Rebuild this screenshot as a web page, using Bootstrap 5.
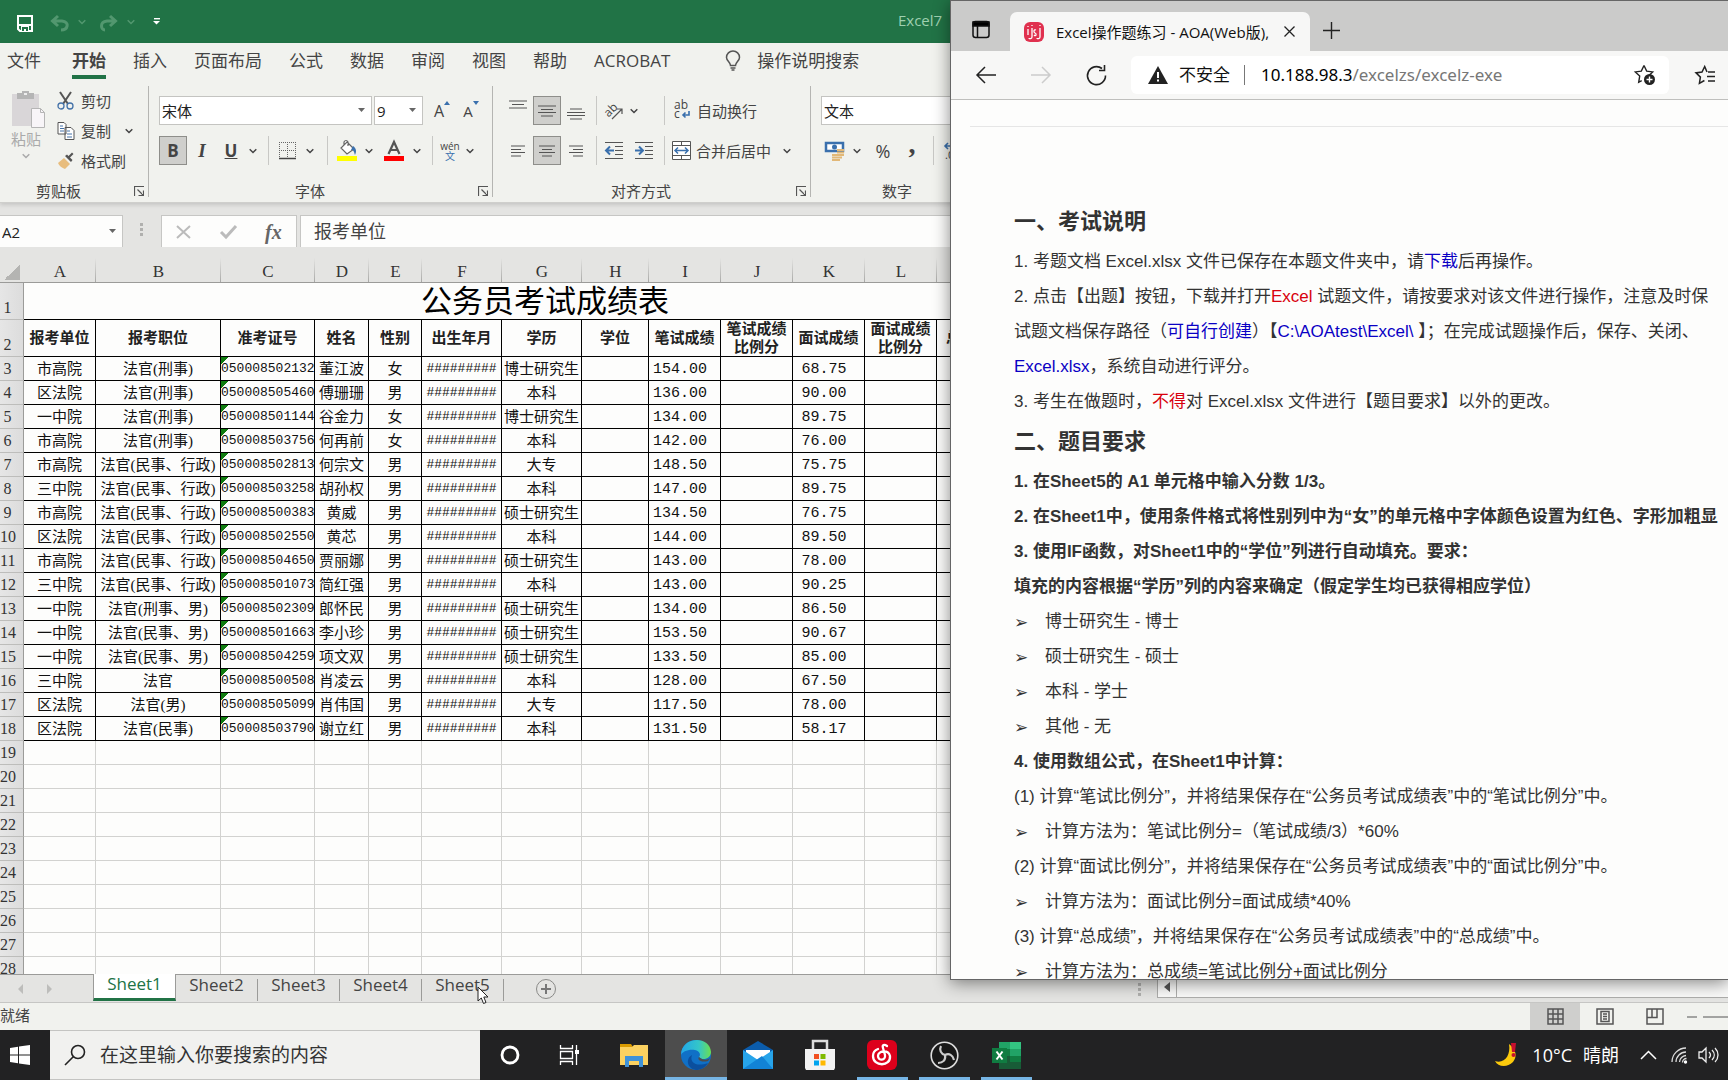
<!DOCTYPE html>
<html lang="zh-CN">
<head>
<meta charset="utf-8">
<meta name="viewport" content="width=device-width, initial-scale=1">
<title>Excel7</title>
<link href="https://cdn.jsdelivr.net/npm/bootstrap@5.3.0/dist/css/bootstrap.min.css" rel="stylesheet">
<style>
:root{--ui:"Open Sans","Noto Sans CJK SC",sans-serif;--green:#217346;--ink:#444}
body{font-family:var(--ui);font-size:15px;line-height:20px;color:var(--ink);height:100vh;overflow:hidden;background:#e4e4e2}
button{font:inherit;color:inherit;background:none;border:0;padding:0;flex:none;display:flex;align-items:center;justify-content:center;white-space:nowrap}
svg{flex:none;display:block;overflow:visible}
input,select{font:inherit;color:#222;border:0;background:none;outline:0;min-width:0}
.titlebar{height:43px;background:var(--green);padding-left:16px}
.titlebar .doc-name{color:#9fd0b0;margin-left:737px}
.ribbon{background:#f1f2ee;height:160px;border-bottom:1px solid #cfcfcc;box-shadow:0 2px 4px #0002}
.tabs-row{height:43px;padding-left:7px;gap:27px;font-size:17px}
.tabs-row button{height:36px;border-bottom:4px solid transparent;border-top:4px solid transparent}
.tabs-row .current{font-weight:700;border-bottom-color:var(--green)}
.grp{background:linear-gradient(#b5b5b2,#b5b5b2) right top/1px 111px no-repeat;height:116px;position:relative;padding:10px 0 0 10px;flex:none}
.grp-name{padding-top:5px}
.tool-row{height:40px;display:flex;align-items:flex-start}
.tool-row>*{height:29px}
.on{background:#cfcfcc;border:1px solid #8e8e8a}
.w16{width:16px}.w20{width:20px}.w28{width:28px}.w30{width:30px}.w24{width:24px}
.vline{width:15px;background:linear-gradient(#c8c8c5,#c8c8c5) center/1px 100% no-repeat;flex:none}
.combo{border:1px solid #c4c4c1;background:#fff;display:flex;align-items:center;flex:none}
.pick{appearance:none;height:100%;width:100%;padding:0 20px 0 2px;background:url("data:image/svg+xml,%3Csvg xmlns='http://www.w3.org/2000/svg' width='8' height='5'%3E%3Cpath d='M0 0h7L3.5 4z' fill='%23666'/%3E%3C/svg%3E") right 5px center no-repeat}
.clip-row{height:30px;display:flex;align-items:center;gap:6px}
.formula{height:44px;padding-top:12px}
.formula>div{height:33px;background:#fdfdfc;border:1px solid #c6c6c4}
.grid-area{flex:1 1 0;min-height:0;overflow:hidden;background:#fdfdfc}
.sheet-grid{table-layout:fixed;border-collapse:separate;border-spacing:0;width:1067px;font-family:"Liberation Serif","Noto Sans CJK SC",serif;color:#111}
.sheet-grid td,.sheet-grid th{height:24px;padding:0;border-right:1px solid #d2d2d0;border-bottom:1px solid #d2d2d0;text-align:center;vertical-align:middle;white-space:nowrap;overflow:hidden;line-height:18px;font-weight:400}
.sheet-grid thead th{height:36px;background:linear-gradient(#e4e4e2,#a9a9a7) right bottom/1px 24px no-repeat #e4e4e2;border-right:0;border-bottom:1px solid #9b9b99;vertical-align:bottom;padding-bottom:1px;font-size:17px;color:#333}
.sheet-grid tbody th{background:linear-gradient(90deg,#e6e6e6,#dcdcdc);border-right-color:#9b9b99;border-bottom-color:#bdbdbb;padding:0 8px 2px 0;font-size:16px;color:#333;vertical-align:bottom;overflow:visible}
.sheet-grid .cap td{height:37px;padding-top:2px;font-size:31px;line-height:34px;color:#000;border-bottom-color:#000}
.sheet-grid .heads th{height:36px}
.sheet-grid .heads td{height:36px;font-weight:700;color:#222;white-space:normal}
.sheet-grid .filled td{border-color:#000}
.sheet-grid .filled .idno,.sheet-grid .filled .hash{font-family:"Liberation Mono",monospace;font-size:13px}
.sheet-grid .idno{text-align:left;background:linear-gradient(135deg,#107c10 5px,transparent 5px) no-repeat}
.sheet-grid .score{font-family:"Liberation Mono",monospace;padding-right:9px;padding-top:2px}
.corner{background:linear-gradient(135deg,transparent 50%,#b4b4b2 50%) 4px 17px/16px 16px no-repeat #e4e4e2 !important}
.sheetbar{height:29px;border-top:1px solid #9b9b99;border-bottom:1px solid #c6c6c4;font-size:17px}
.sheetbar .tab{width:82px;height:22px;border-right:1px solid #9b9b99;line-height:16px;padding-bottom:11px}
.sheetbar .tab.current{width:83px;height:27px;margin-top:-1px;background:#fff;border:solid #9b9b99;border-width:0 1px 3px;border-bottom-color:var(--green);color:var(--green);padding-bottom:4px}
.hscroll{height:23px;background:#fafaf9;border:1px solid #adadab;border-right:0;width:571px}
.statusbar{height:27px;background:#f1f2ee}
.statusbar button{width:50px;height:27px}
.taskbar{height:50px;background:#222223;color:#fff}
.taskbar .find{width:430px;background:#f1f1ef;border:1px solid #c4c4c2;border-width:1px 0;color:#333;padding-left:14px;gap:10px;flex:none}
.find input{width:330px;font-size:19px}
.find input::placeholder{color:#333;opacity:1}
.app{width:62px;height:50px}
.app.run{background:linear-gradient(#76b5e5,#76b5e5) center bottom/51px 3px no-repeat}
.app.front{background:linear-gradient(#76b5e5,#76b5e5) center bottom/100% 3px no-repeat #4d4d4d}
.edge-win{position:absolute;left:950px;top:0;right:0;bottom:100px;background:#fdfdfc;border:1px solid #666;border-right:0;box-shadow:0 3px 16px #0007;overflow:hidden;color:#111}
.strip{height:50px;background:#cbcbca;padding-left:19px}
.strip .page-tab{width:300px;height:39px;background:#f7f7f6;border-radius:7px 7px 0 0;margin-left:18px;padding:0 15px 0 14px}
.strip .page-title{margin-left:12px;color:#111;white-space:nowrap}
.navrow{height:49px;background:#f7f7f6;border-bottom:1px solid #bfbfbd;padding-left:21px;font-size:17px}
.addr{width:538px;height:38px;background:#fff;border-radius:6px;padding-left:17px;flex:none}
.addr .url{color:#777;white-space:nowrap;font-family:"Noto Sans","Open Sans",sans-serif}
.paper{margin-left:19px;margin-top:26px;border-top:1px solid #e6e6e6;padding:72px 0 0 44px;font:17px/35px "Liberation Sans","Noto Sans CJK SC",sans-serif;color:#333;white-space:nowrap}
.paper h2{font-size:22px;line-height:45px;font-weight:700;margin:0}
.paper p,.paper ul{margin:0}
.paper li{height:35px;display:flex;align-items:center}
.paper li::before{content:"➢";font-family:"DejaVu Sans",sans-serif;font-size:17px;line-height:20px;width:31px}
.paper a,.paper .blue{color:#0a00c4;text-decoration:none}
.paper .red{color:#d8000c}
.pointer{position:absolute;left:477px;bottom:75px}
</style>
<script src="https://cdn.jsdelivr.net/npm/bootstrap@5.3.0/dist/js/bootstrap.bundle.min.js"></script>
</head>
<body class="d-flex flex-column position-relative">
<svg width="0" height="0" class="position-absolute" aria-hidden="true"><defs>
<symbol id="chev" viewBox="0 0 8 6"><path d="M.7 1.2 4 4.5l3.300-3.300" fill="none" stroke="currentColor" stroke-width="1.500"/></symbol>
<symbol id="launch" viewBox="0 0 10 10"><path d="M.5 10V.5H10M3.500 3.500 9 9M9.500 4.500v5h-5" fill="none" stroke="#555" stroke-width="1.200"/></symbol>
</defs></svg>

<header class="titlebar d-flex align-items-center flex-shrink-0">
  <button class="pt-1" aria-label="保存"><svg width="18" height="18" viewBox="0 0 18 18"><path d="M2 1h14v15H4l-2-2z" fill="none" stroke="#fff" stroke-width="2"/><path d="M2 10h13" stroke="#fff" stroke-width="2"/><path d="M5 11h8v6H5z" fill="#fff"/><path d="M6 12h6v4h-2v-2H8v2H6z" fill="#217346"/></svg></button>
  <button class="ms-3 pt-1" aria-label="撤消"><svg width="20" height="18" viewBox="0 0 20 18"><path d="M8 1 2.500 6 8 11M3 6h9c8 1 6 9-1 9" fill="none" stroke="#52976f" stroke-width="3"/></svg></button>
  <svg class="ms-2" width="8" height="6" style="color:#52976f"><use href="#chev"/></svg>
  <button class="pt-1" style="margin-left:13px" aria-label="恢复"><svg width="20" height="18" viewBox="0 0 20 18"><path d="M11 1l5.500 5-5.500 5M16 6H8c-8 1-6 9-2 9" fill="none" stroke="#52976f" stroke-width="3"/></svg></button>
  <svg class="ms-2" width="8" height="6" style="color:#52976f"><use href="#chev"/></svg>
  <button style="margin-left:18px" aria-label="自定义快速访问工具栏"><svg width="8" height="7" viewBox="0 0 8 7"><path d="M1 .7h6" stroke="#fff" stroke-width="1.400"/><path d="M0 3h7L3.500 6.500z" fill="#fff"/></svg></button>
  <span class="doc-name mb-1">Excel7</span>
</header>

<section class="ribbon flex-shrink-0">
  <nav class="tabs-row d-flex">
    <button>文件</button><button class="current ms-1">开始</button><button>插入</button><button>页面布局</button><button>公式</button><button>数据</button><button>审阅</button><button>视图</button><button>帮助</button><button>ACROBAT</button>
    <button class="ms-4 gap-3"><svg class="ms-1" width="16" height="20" viewBox="0 0 16 20"><path d="M5.500 14.500C5.500 11 1.500 10 1.500 6.500a6.300 6.300 0 0 1 13 0C14.500 10 10.500 11 10.500 14.500zM5.500 17h5M6.500 19h3" fill="none" stroke="#555" stroke-width="1.500"/></svg>操作说明搜索</button>
  </nav>
  <div class="d-flex overflow-hidden">
    <!-- clipboard -->
    <div class="grp" style="width:149px;padding:0">
      <div class="d-flex" style="height:90px">
        <button class="flex-column align-items-center justify-content-start" style="width:52px;color:#aaa;padding-top:4px">
          <svg class="ms-1" width="36" height="39" viewBox="0 0 36 39"><path d="M2 4h27v32H2z" fill="#d9d6d8"/><path d="M7 3h5V1h7v2h5v6H7z" fill="#b5b5b5"/><path d="M14 3h3v2h-3z" fill="#eee"/><path d="M21.500 18.500h9l4 4v15h-13z" fill="#f8f5f8" stroke="#b5b5b5"/><path d="M30.500 18.500v4h4" fill="none" stroke="#b5b5b5"/></svg>粘贴<svg class="mt-1" width="8" height="6"><use href="#chev"/></svg></button>
        <div style="margin-left:5px">
          <button class="clip-row"><svg width="18" height="18" viewBox="0 0 18 18"><path d="M3 0l8 12M14 0 6 12" stroke="#555" stroke-width="2"/><circle cx="4" cy="14" r="3" fill="none" stroke="#4472a8" stroke-width="1.300"/><circle cx="13" cy="14" r="3" fill="none" stroke="#4472a8" stroke-width="1.300"/></svg>剪切</button>
          <div class="clip-row"><button class="clip-row"><svg width="18" height="18" viewBox="0 0 18 18"><path d="M1 .5h6l2 2V12H1zM8 5.500h6l3 3V17.500H8z" fill="#fff" stroke="#555"/><path d="M3 4h3M3 6.500h4M3 9h4M10 9h3M10 12h5M10 15h5" stroke="#4472a8"/></svg>复制</button><svg class="ms-2" width="8" height="6"><use href="#chev"/></svg></div>
          <button class="clip-row"><svg width="18" height="18" viewBox="0 0 18 18"><path d="M1 11l6-5 6 6-5 5C5 16 2 14 1 11z" fill="#e8bd7d"/><path d="M8 4l6 6 1.500-2L13 5.500 16.500 2 15 .5 11.500 4 10 2.500z" fill="#555"/></svg>格式刷</button>
        </div>
      </div>
      <div class="d-flex align-items-center grp-name" style="padding-left:36px">剪贴板<svg style="margin-left:53px" width="10" height="10"><use href="#launch"/></svg></div>
    </div>
    <!-- font -->
    <div class="grp" style="width:344px">
      <div class="tool-row">
        <label class="combo" style="width:213px"><select class="pick" aria-label="字体"><option>宋体</option></select></label>
        <label class="combo" style="width:49px;margin-left:2px"><select class="pick" aria-label="字号"><option>9</option></select></label>
        <button class="w30 ms-1" style="font-size:16px" aria-label="增大字号">A<svg width="6" height="4" class="mb-3"><path d="M0 4 3 0l3 4z" fill="#3a70ad"/></svg></button>
        <button class="w28" aria-label="减小字号">A<svg width="6" height="4" class="mb-3"><path d="M0 0h6L3 4z" fill="#3a70ad"/></svg></button>
      </div>
      <div class="tool-row">
        <button class="w28 on fw-bold" style="font-size:17px">B</button>
        <button class="w30 fw-bold fst-italic" style="font-family:'Liberation Serif',serif;font-size:19px">I</button>
        <button class="w28 fw-bold text-decoration-underline" style="font-size:17px">U</button>
        <button class="w16" aria-label="下划线选项"><svg width="8" height="6"><use href="#chev"/></svg></button>
        <i class="vline"></i>
        <button class="w24" aria-label="边框"><svg width="18" height="18" viewBox="0 0 18 18"><path d="M.5 0v16M8.500 0v16M16.500 0v16M0 .5h17M0 8.500h17" stroke="#666" stroke-dasharray="1 1"/><path d="M0 16.500h17" stroke="#444" stroke-width="1.500"/></svg></button>
        <button class="w20" aria-label="边框选项"><svg width="8" height="6"><use href="#chev"/></svg></button>
        <i class="vline"></i>
        <button class="w24" aria-label="填充颜色"><svg width="22" height="21" viewBox="0 0 22 21"><path d="M11 2l7 7-7 5-6-6zM8 6V2c1-2 3-2 4 0v4" fill="#fff" stroke="#666" stroke-width="1.200"/><path d="M17 6c3 2 4 5 2 9-1-3-1-5-4-5z" fill="#3a70ad"/><path d="M1 16h20v5H1z" fill="#ff0"/></svg></button>
        <button class="w20" aria-label="填充选项"><svg width="8" height="6"><use href="#chev"/></svg></button>
        <button class="w30" aria-label="字体颜色"><svg width="20" height="20" viewBox="0 0 20 20"><path d="M4.500 13 10 1l5.500 12M6.500 9h7" fill="none" stroke="#555" stroke-width="2.200"/><path d="M0 15h20v5H0z" fill="#f00"/></svg></button>
        <button class="w16" aria-label="颜色选项"><svg width="8" height="6"><use href="#chev"/></svg></button>
        <i class="vline"></i>
        <button class="flex-column w20" style="font-size:10px;line-height:10px"><span>wén</span><span style="color:#3a70ad">文</span></button>
        <button class="w20" aria-label="拼音选项"><svg width="8" height="6"><use href="#chev"/></svg></button>
      </div>
      <div class="d-flex align-items-center grp-name" style="padding-left:136px;padding-right:5px">字体<svg class="ms-auto" width="10" height="10"><use href="#launch"/></svg></div>
    </div>
    <!-- alignment -->
    <div class="grp" style="width:318px">
      <div class="tool-row">
        <button class="w30" aria-label="顶端对齐" style="padding-bottom:12px"><svg width="18" height="9" viewBox="0 0 18 9"><path d="M0 1h18M3 4.500h12M0 8h18" stroke="#555"/></svg></button>
        <button class="w28 on" aria-label="垂直居中"><svg width="18" height="12" viewBox="0 0 18 12"><path d="M0 1h18M3 4.500h12M0 7.500h18M3 11h12" stroke="#555"/></svg></button>
        <button class="w30" aria-label="底端对齐" style="padding-top:6px"><svg width="18" height="12" viewBox="0 0 18 12"><path d="M3 1h12M0 4.500h18M0 7.500h18M3 11h12" stroke="#555"/></svg></button>
        <i class="vline" style="margin-left:-2px"></i>
        <button class="w20" aria-label="方向"><svg width="20" height="18" viewBox="0 0 20 18"><g transform="rotate(-45 8 8)"><text x="0" y="11" font-size="12" fill="#444">ab</text></g><path d="M8 17 18 7M18 12V7h-5" fill="none" stroke="#555" stroke-width="1.200"/></svg></button>
        <button class="w20" aria-label="方向选项"><svg width="8" height="6"><use href="#chev"/></svg></button>
        <i class="vline" style="margin-left:13px"></i>
        <button style="padding-left:2px;gap:5px"><svg width="18" height="19" viewBox="0 0 18 19"><text x="0" y="8" font-size="12" fill="#444">ab</text><text x="0" y="17" font-size="12" fill="#444">c</text><path d="M15 10v4H9M11.500 11.500 9 14l2.500 2.500" fill="none" stroke="#3a70ad" stroke-width="1.600"/></svg>自动换行</button>
      </div>
      <div class="tool-row">
        <button class="w30" aria-label="左对齐"><svg width="14" height="12" viewBox="0 0 14 12"><path d="M0 1h14M0 4.500h10M0 7.500h14M0 11h10" stroke="#555"/></svg></button>
        <button class="w28 on" aria-label="居中"><svg width="16" height="12" viewBox="0 0 16 12"><path d="M0 1h16M3 4.500h10M0 7.500h16M3 11h10" stroke="#555"/></svg></button>
        <button class="w30" aria-label="右对齐"><svg width="14" height="12" viewBox="0 0 14 12"><path d="M0 1h14M4 4.500h10M0 7.500h14M4 11h10" stroke="#555"/></svg></button>
        <i class="vline" style="margin-left:-2px"></i>
        <button class="w20" aria-label="减少缩进"><svg width="19" height="17" viewBox="0 0 19 17"><path d="M0 .5h18M10 4.500h8M10 8.500h8M10 12.500h8M0 16.500h18" stroke="#555"/><path d="M9 8.500H1M5 4.500 1 8.500l4 4" fill="none" stroke="#3a70ad" stroke-width="2"/></svg></button>
        <button class="w20" style="margin-left:10px" aria-label="增加缩进"><svg width="19" height="17" viewBox="0 0 19 17"><path d="M0 .5h18M10 4.500h8M10 8.500h8M10 12.500h8M0 16.500h18" stroke="#555"/><path d="M0 8.500h8M4 4.500l4 4-4 4" fill="none" stroke="#3a70ad" stroke-width="2"/></svg></button>
        <i class="vline" style="margin-left:3px"></i>
        <button style="gap:5px"><svg width="19" height="19" viewBox="0 0 19 19"><path d="M.5.5h18v18H.5zM.5 4.500h18M.5 14.500h18M9.500 0v4M9.500 15v4" fill="#fff" stroke="#555"/><path d="M3 9.500h13M6 6.500l-3 3 3 3M13 6.500l3 3-3 3" fill="none" stroke="#3a70ad" stroke-width="1.500"/></svg>合并后居中</button>
        <button class="w16 ms-2" aria-label="合并选项"><svg width="8" height="6"><use href="#chev"/></svg></button>
      </div>
      <div class="d-flex align-items-center grp-name" style="padding-left:108px;padding-right:5px">对齐方式<svg class="ms-auto" width="10" height="10"><use href="#launch"/></svg></div>
    </div>
    <!-- number -->
    <div class="grp" style="width:240px">
      <div class="tool-row"><label class="combo" style="width:170px"><select class="pick" aria-label="数字格式"><option>文本</option></select></label></div>
      <div class="tool-row">
        <button class="w28" aria-label="会计数字格式"><svg width="20" height="20" viewBox="0 0 20 20"><path d="M1 2h17v8H1z" fill="#fff" stroke="#3a70ad" stroke-width="2.500"/><circle cx="9.500" cy="6" r="2.500" fill="#3a70ad"/><path d="M12 9h7M12 11.500h7M12 14h7M7 14h5M7 16.500h10M7 19h8" stroke="#e2b877" stroke-width="1.800"/></svg></button>
        <button class="w16" aria-label="会计选项"><svg width="8" height="6"><use href="#chev"/></svg></button>
        <button class="w30" style="font-size:18px;margin-left:3px">%</button>
        <button class="w28 fw-bold" style="font-size:28px;padding-bottom:14px;font-family:'Liberation Serif',serif">,</button>
        <i class="vline"></i>
        <button class="w24" aria-label="增加小数位数"><svg width="18" height="18" viewBox="0 0 18 18"><path d="M8 4H1M4 1 1 4l3 3" fill="none" stroke="#3a70ad" stroke-width="1.600"/><text x="1" y="17" font-size="11" fill="#444">.00</text></svg></button>
      </div>
      <div class="grp-name" style="padding-left:61px">数字</div>
    </div>
  </div>
</section>

<section class="formula d-flex flex-shrink-0">
  <div class="d-flex border-start-0" style="width:123px"><input class="pick" aria-label="名称框" value="A2"></div>
  <svg class="mt-2" style="margin:0 17px" width="4" height="14"><path d="M0 0h3v3H0zM0 5h3v3H0zM0 10h3v3H0z" fill="#b0b0ae"/></svg>
  <div class="d-flex align-items-center justify-content-around" style="width:136px">
    <button aria-label="取消"><svg width="15" height="14" viewBox="0 0 15 14"><path d="M1 1l13 12M14 1 1 13" stroke="#bbb" stroke-width="2"/></svg></button>
    <button aria-label="输入"><svg width="17" height="14" viewBox="0 0 17 14"><path d="M1 7l5 5L16 1" fill="none" stroke="#bbb" stroke-width="3"/></svg></button>
    <button class="fst-italic fw-bold" style="font-family:'Liberation Serif',serif;font-size:20px;color:#666">fx</button>
  </div>
  <div class="flex-grow-1 border-end-0" style="margin-left:3px"><input class="w-100 h-100" style="padding:0 0 4px 13px;font-size:18px;color:#444" aria-label="编辑栏" value="报考单位"></div>
</section>

<main class="grid-area"><table class="sheet-grid"><colgroup id="cols"></colgroup><thead><tr id="letters"></tr></thead><tbody id="cells"></tbody></table></main>

<nav class="sheetbar d-flex flex-shrink-0">
  <svg style="margin:9px 0 0 17px" width="36" height="10"><path d="M6 0v10L1 5zM30 0v10l5-5z" fill="#bdbdbb"/></svg>
  <button class="tab current" style="margin-left:40px">Sheet1</button><button class="tab mt-1">Sheet2</button><button class="tab mt-1">Sheet3</button><button class="tab mt-1">Sheet4</button><button class="tab mt-1">Sheet5</button>
  <button style="margin-left:31px" aria-label="新工作表"><svg width="22" height="22" viewBox="0 0 22 22"><circle cx="11" cy="11" r="9.500" fill="none" stroke="#8a8a88"/><path d="M11 6v10M6 11h10" stroke="#777" stroke-width="2"/></svg></button>
  <svg class="ms-auto" style="margin:8px 15px 0 0" width="4" height="14"><path d="M0 0h3v3H0zM0 5h3v3H0zM0 10h3v3H0z" fill="#b0b0ae"/></svg>
  <div class="hscroll d-flex"><button style="width:19px;border-right:1px solid #adadab" aria-label="向左滚动"><svg width="6" height="10"><path d="M6 0v10L0 5z" fill="#555"/></svg></button></div>
</nav>

<footer class="statusbar d-flex align-items-center flex-shrink-0">
  <span class="mb-1">就绪</span>
  <button class="ms-auto" style="background:#cfcfcd" aria-label="普通"><svg width="17" height="17" viewBox="0 0 17 17"><path d="M1 1h15v15H1zM6 1v15M11 1v15M1 6h15M1 11h15" fill="none" stroke="#555" stroke-width="1.500"/></svg></button>
  <button aria-label="页面布局视图"><svg width="18" height="17" viewBox="0 0 18 17"><path d="M1 1h16v15H1zM5 3.500h8v10H5zM7 6h4M7 8.500h4M7 11h4" fill="none" stroke="#555" stroke-width="1.500"/></svg></button>
  <button aria-label="分页预览"><svg width="18" height="17" viewBox="0 0 18 17"><path d="M1 1h16v15H1zM1 9.500h10V1M6 1v8" fill="none" stroke="#555" stroke-width="1.500"/></svg></button>
  <svg width="48" height="10"><path d="M7 5h10M23 5h25" stroke="#555"/></svg>
</footer>

<div class="taskbar d-flex flex-shrink-0">
  <button style="width:50px;padding-right:10px" aria-label="开始"><svg width="20" height="20" viewBox="0 0 20 20"><path d="M0 3l8-1.200V9.500H0zM9 1.600 20 0v9.500H9zM0 10.500h8v7.700L0 17zM9 10.500h11V20L9 18.400z" fill="#fff"/></svg></button>
  <label class="find d-flex align-items-center"><svg width="22" height="22" viewBox="0 0 22 22"><circle cx="14" cy="8" r="6.500" fill="none" stroke="#222" stroke-width="1.600"/><path d="M9.500 12.500 1 21" stroke="#222" stroke-width="1.600"/></svg><input type="search" placeholder="在这里输入你要搜索的内容" style="margin-left:2px"></label>
  <button style="width:60px" aria-label="Cortana"><svg width="20" height="20" viewBox="0 0 20 20"><circle cx="10" cy="10" r="8" fill="none" stroke="#fff" stroke-width="2.800"/></svg></button>
  <button style="width:60px;margin-right:3px" aria-label="任务视图"><svg width="20" height="20" viewBox="0 0 20 20"><path d="M.5 0v3.500h12V0M.5 20v-3.500h12V20M.5 6.500h12v7H.5zM16.500 0v20" fill="none" stroke="#fff" stroke-width="1.300"/><path d="M15 5h4v4h-4z" fill="#fff"/></svg></button>
  <button class="app" aria-label="文件资源管理器"><svg width="28" height="24" viewBox="0 0 28 24"><path d="M0 1h11l2 3H0z" fill="#d99a00"/><path d="M0 4l12 0 2-2h14v20H0z" fill="#fbd160"/><path d="M5 13h18v11h-4v-6H9v6H5z" fill="#3f92d8"/></svg></button>
  <button class="app front" aria-label="Edge"><svg width="30" height="30" viewBox="0 0 30 30"><defs><linearGradient id="eg" x1="0" x2="1"><stop offset="0" stop-color="#22a7e8"/><stop offset=".6" stop-color="#34c6c8"/><stop offset="1" stop-color="#6be050"/></linearGradient></defs><circle cx="15" cy="15" r="15" fill="#1070c6"/><path d="M0 15C0-4 29-5 30 12c0 7-9 9-12 5 2-2 1-6-4-7C7 9 1 12 0 15z" fill="url(#eg)"/><path d="M11 15c-3 8 5 12 16 8-3 5-8 7-12 7C5 28 5 18 11 15z" fill="#0b4f9e"/><path d="M18 17c-2 2 1 6 9 4l3-4c-3 4-9 3-12 0z" fill="#4d4d4d"/></svg></button>
  <button class="app" aria-label="邮件"><svg width="30" height="28" viewBox="0 0 30 28"><path d="M0 9 15 0l15 9v4H0z" fill="#0b5cab"/><path d="M3 9h24v10H3z" fill="#fff"/><path d="M0 9l15 10L30 9v19H0z" fill="#27a4ea"/><path d="M0 28 19 15l11 13z" fill="#1283d6"/></svg></button>
  <button class="app" aria-label="应用商店"><svg width="30" height="30" viewBox="0 0 30 30"><path d="M8 10V1h14v9" fill="none" stroke="#ddd" stroke-width="2.500"/><path d="M0 9h30v19l-1 2H1l-1-2z" fill="#f3f3f3"/><path d="M9 14h5v5H9z" fill="#f25022"/><path d="M15.500 14h5v5h-5z" fill="#7fba00"/><path d="M9 20.500h5v5H9z" fill="#00a4ef"/><path d="M15.500 20.500h5v5h-5z" fill="#ffb900"/></svg></button>
  <button class="app run" aria-label="网易云音乐"><svg width="30" height="30" viewBox="0 0 30 30"><rect width="30" height="30" rx="6" fill="#dd001b"/><path d="M20 6c-3-2-5-1-4 2l2 7c1 6-7 6-7 1 0-5 10-7 12 0 1 11-17 11-17 0 0-4 2-6 5-7" fill="none" stroke="#fff" stroke-width="2.300" stroke-linecap="round"/></svg></button>
  <button class="app run" aria-label="OBS"><svg width="29" height="29" viewBox="0 0 29 29"><circle cx="14.500" cy="14.500" r="13.300" fill="#181818" stroke="#ddd" stroke-width="1.600"/><path d="M11 5c-2 4 0 8 4 9 4-2 8 0 9 5M15 14c1 5-2 8-7 8" fill="none" stroke="#ccc" stroke-width="2.200"/></svg></button>
  <button class="app run" aria-label="Excel"><svg width="29" height="27" viewBox="0 0 29 27"><path d="M7 0h11v7H7z" fill="#21a366"/><path d="M18 0h11v7H18z" fill="#33c481"/><path d="M7 7h11v7H7z" fill="#107c41"/><path d="M18 7h11v7H18z" fill="#21a366"/><path d="M7 14h22v13H7z" fill="#185c37"/><path d="M18 14h11v6H18z" fill="#107c41"/><path d="M0 6h15v15H0z" fill="#107c41"/><path d="M4.500 9.500l6 8M10.500 9.500l-6 8" stroke="#fff" stroke-width="2"/></svg></button>
  <div class="ms-auto d-flex align-items-center" style="font-size:18px">
    <svg width="24" height="24" viewBox="0 0 24 24"><path d="M15 1c8 6 8 13 4 18-6 6-15 5-18-1 9 3 16-5 14-17z" fill="#fcca0c"/><path d="M17 0h5l-1 9h-3z" fill="#c8102e"/><circle cx="19.500" cy="12" r="2" fill="#c8102e"/></svg>
    <span style="margin-left:14px">10°C</span><span style="margin-left:11px">晴朗</span>
    <svg style="margin-left:21px" width="17" height="10" viewBox="0 0 17 10"><path d="M1 9l7.500-7.500L16 9" fill="none" stroke="#fff" stroke-width="1.500"/></svg>
    <svg style="margin-left:14px" width="17" height="17" viewBox="0 0 17 17"><path d="M1 15A14 14 0 0 1 15 1M5 15A10 10 0 0 1 15 5M8.500 15a7 7 0 0 1 6.500-6.500M11.500 15.500a4 4 0 0 1 4-4" fill="none" stroke="#ddd" stroke-width="1.300"/><circle cx="14.500" cy="15" r="1.700" fill="#fff"/></svg>
    <svg style="margin:0 9px 0 10px" width="21" height="18" viewBox="0 0 21 18"><path d="M1 6h3l4-4v14l-4-4H1zM11 6c2 2 2 4 0 6M14 4c3 3 3 7 0 10M17 2c4 4 4 10 0 14" fill="none" stroke="#eee" stroke-width="1.300"/></svg>
  </div>
</div>

<!-- browser window -->
<section class="edge-win">
  <div class="strip d-flex align-items-end">
    <button class="pb-2" aria-label="标签页操作"><svg class="mb-1" width="22" height="19" viewBox="0 0 22 19"><rect x="3" y="1.500" width="16" height="16" rx="2.500" fill="none" stroke="#111" stroke-width="1.500"/><path d="M3 2h16v4H3zM7.500 6v11" stroke="#111" stroke-width="1.500"/></svg></button>
    <div class="page-tab d-flex align-items-center">
      <svg width="20" height="20" viewBox="0 0 20 20"><rect width="20" height="20" rx="6" fill="#e0314f"/><path d="M4 7v6M8 6v9c0 2-3 2-3 1M12 8c-2-1-3 2-1 3s1 4-1 2M16 6v9c0 2-3 2-3 1M4 4v1M8 3v1M16 3v1" fill="none" stroke="#fff" stroke-width="1.300"/></svg>
      <span class="page-title">Excel操作题练习 - AOA(Web版),</span>
      <button class="ms-auto" aria-label="关闭标签页"><svg width="11" height="11" viewBox="0 0 11 11"><path d="M.5.5l10 10M10.500.5l-10 10" stroke="#222" stroke-width="1.300"/></svg></button>
    </div>
    <button style="margin:0 0 12px 13px" aria-label="新建标签页"><svg width="17" height="17"><path d="M8.500 0v17M0 8.500h17" stroke="#222" stroke-width="1.400"/></svg></button>
  </div>
  <div class="navrow d-flex align-items-center">
    <button style="width:28px" aria-label="后退"><svg width="20" height="18" viewBox="0 0 20 18"><path d="M20 9H1M9 1 1 9l8 8" fill="none" stroke="#222" stroke-width="1.500"/></svg></button>
    <button style="width:28px;margin-left:27px" aria-label="前进"><svg width="20" height="18" viewBox="0 0 20 18"><path d="M0 9h19M11 1l8 8-8 8" fill="none" stroke="#ccc" stroke-width="1.500"/></svg></button>
    <button style="width:28px;margin-left:27px;margin-right:21px" aria-label="刷新"><svg width="21" height="21" viewBox="0 0 21 21"><path d="M19.500 10.500A9 9 0 1 1 16 3.500M18.500 0v5.500H13" fill="none" stroke="#222" stroke-width="1.600"/></svg></button>
    <div class="addr d-flex align-items-center">
      <svg width="20" height="18" viewBox="0 0 20 18"><path d="M10 0l10 18H0z" fill="#222"/><path d="M10 6v6M10 13.500v2" stroke="#fff" stroke-width="2"/></svg>
      <span style="margin-left:11px">不安全</span>
      <i class="vline" style="height:20px;width:1px;background:#777;margin:0 16px 0 14px"></i>
      <span class="url"><span class="text-black">10.188.98.3</span>/excelzs/excelz-exe</span>
      <button class="ms-auto" style="padding-right:13px" aria-label="添加到收藏夹"><svg width="22" height="22" viewBox="0 0 22 22"><path d="M10 1.500l2.700 5.600 6 .8-4.400 4.200M10 1.500 7.300 7.100l-6 .8 4.400 4.200-1 6.200 3-1.600" fill="none" stroke="#222" stroke-width="1.400"/><circle cx="15.500" cy="15.500" r="5.500" fill="#222"/><path d="M15.500 12.500v6M12.500 15.500h6" stroke="#fff" stroke-width="1.400"/></svg></button>
    </div>
    <button style="margin-left:25px" aria-label="收藏夹"><svg width="22" height="20" viewBox="0 0 22 20"><path d="M13 7l-2.300-5.500L8 7.100l-6 .8 4.400 4.200-1 6.200 5-2.800M14 7h7M13 11.500h8M14 16h7" fill="none" stroke="#222" stroke-width="1.500"/></svg></button>
  </div>
  <article class="paper">
    <h2>一、考试说明</h2>
    <p>1. 考题文档 Excel.xlsx 文件已保存在本题文件夹中，请<a href="#">下载</a>后再操作。</p>
    <p>2. 点击【出题】按钮，下载并打开<span class="red">Excel</span> 试题文件，请按要求对该文件进行操作，注意及时保<br>试题文档保存路径（<span class="blue">可自行创建</span>）【<span class="blue">C:\AOAtest\Excel\</span> 】；在完成试题操作后，保存、关闭、<br><span class="blue">Excel.xlsx</span>，系统自动进行评分。</p>
    <p>3. 考生在做题时，<span class="red">不得</span>对 Excel.xlsx 文件进行【题目要求】以外的更改。</p>
    <h2>二、题目要求</h2>
    <p class="fw-bold">1. 在Sheet5的 A1 单元格中输入分数 1/3。</p>
    <p class="fw-bold">2. 在Sheet1中，使用条件格式将性别列中为“女”的单元格中字体颜色设置为红色、字形加粗显</p>
    <p class="fw-bold">3. 使用IF函数，对Sheet1中的“学位”列进行自动填充。要求：<br>填充的内容根据“学历”列的内容来确定（假定学生均已获得相应学位）</p>
    <ul class="list-unstyled"><li>博士研究生 - 博士</li><li>硕士研究生 - 硕士</li><li>本科 - 学士</li><li>其他 - 无</li></ul>
    <p class="fw-bold">4. 使用数组公式，在Sheet1中计算：</p>
    <p>(1) 计算“笔试比例分”，并将结果保存在“公务员考试成绩表”中的“笔试比例分”中。</p>
    <ul class="list-unstyled"><li>计算方法为：笔试比例分=（笔试成绩/3）*60%</li></ul>
    <p>(2) 计算“面试比例分”，并将结果保存在“公务员考试成绩表”中的“面试比例分”中。</p>
    <ul class="list-unstyled"><li>计算方法为：面试比例分=面试成绩*40%</li></ul>
    <p>(3) 计算“总成绩”，并将结果保存在“公务员考试成绩表”中的“总成绩”中。</p>
    <ul class="list-unstyled"><li>计算方法为：总成绩=笔试比例分+面试比例分</li></ul>
  </article>
</section>
<svg class="pointer" width="13" height="19" viewBox="0 0 13 19"><path d="M1 1v14l3.300-3 2.200 5.500 2.500-1L6.800 11H11z" fill="#fff" stroke="#222"/></svg>

<script>
const widths=[24,72,125,94,54,53,80,80,67,72,72,72,72,64,66];
document.getElementById('cols').innerHTML=widths.map(w=>`<col style="width:${w}px">`).join('');
document.getElementById('letters').innerHTML='<th class="corner"></th>'+[...'ABCDEFGHIJKLMN'].map(c=>`<th>${c}</th>`).join('');
const heads=['报考单位','报考职位','准考证号','姓名','性别','出生年月','学历','学位','笔试成绩','笔试成绩<br>比例分','面试成绩','面试成绩<br>比例分','总成绩',''];
const people=`市高院|法官(刑事)|050008502132|董江波|女|博士研究生|154.00|68.75
区法院|法官(刑事)|050008505460|傅珊珊|男|本科|136.00|90.00
一中院|法官(刑事)|050008501144|谷金力|女|博士研究生|134.00|89.75
市高院|法官(刑事)|050008503756|何再前|女|本科|142.00|76.00
市高院|法官(民事、行政)|050008502813|何宗文|男|大专|148.50|75.75
三中院|法官(民事、行政)|050008503258|胡孙权|男|本科|147.00|89.75
市高院|法官(民事、行政)|050008500383|黄威|男|硕士研究生|134.50|76.75
区法院|法官(民事、行政)|050008502550|黄芯|男|本科|144.00|89.50
市高院|法官(民事、行政)|050008504650|贾丽娜|男|硕士研究生|143.00|78.00
三中院|法官(民事、行政)|050008501073|简红强|男|本科|143.00|90.25
一中院|法官(刑事、男)|050008502309|郎怀民|男|硕士研究生|134.00|86.50
一中院|法官(民事、男)|050008501663|李小珍|男|硕士研究生|153.50|90.67
一中院|法官(民事、男)|050008504259|项文双|男|硕士研究生|133.50|85.00
三中院|法官|050008500508|肖凌云|男|本科|128.00|67.50
区法院|法官(男)|050008505099|肖伟国|男|大专|117.50|78.00
区法院|法官(民事)|050008503790|谢立红|男|本科|131.50|58.17`.split('\n').map(r=>r.split('|'));
let rows='<tr class="cap"><th>1</th><td colspan="14">公务员考试成绩表</td></tr>';
rows+='<tr class="heads filled"><th>2</th>'+heads.map(h=>`<td>${h}</td>`).join('')+'</tr>';
people.forEach((p,i)=>{rows+=`<tr class="filled"><th>${i+3}</th><td>${p[0]}</td><td>${p[1]}</td><td class="idno">${p[2]}</td><td>${p[3]}</td><td>${p[4]}</td><td class="hash">#########</td><td>${p[5]}</td><td></td><td class="score">${p[6]}</td><td></td><td class="score">${p[7]}</td><td></td><td></td><td></td></tr>`});
for(let n=19;n<=28;n++)rows+=`<tr><th>${n}</th>${'<td></td>'.repeat(14)}</tr>`;
document.getElementById('cells').innerHTML=rows;
</script>
</body>
</html>
